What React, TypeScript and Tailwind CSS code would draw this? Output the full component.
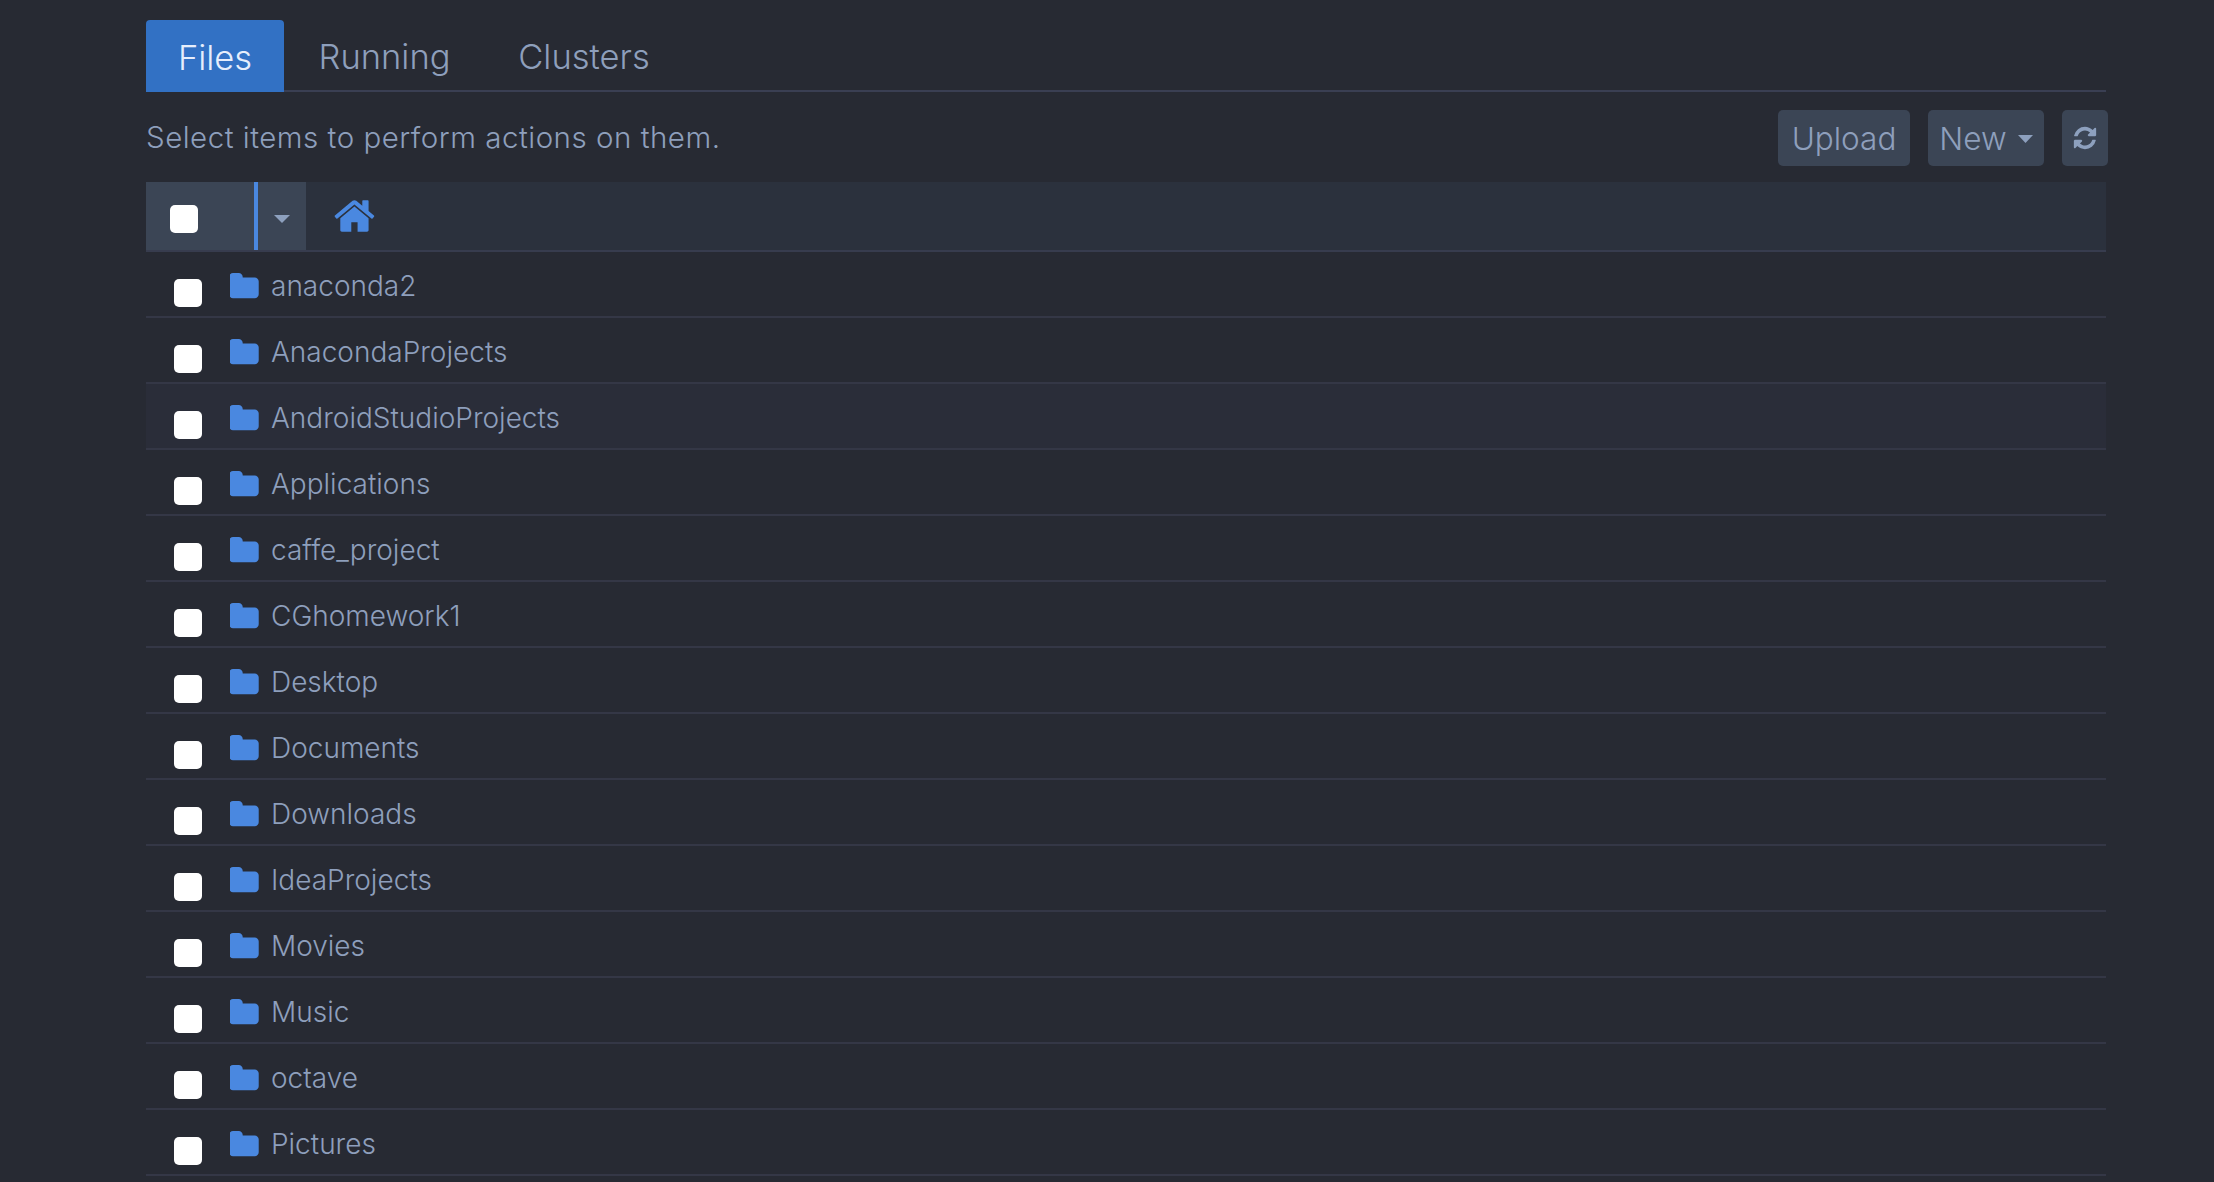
const HOME = "M1408 992v480q0 26-19 45t-45 19h-384v-384h-256v384h-384q-26 0-45-19t-19-45v-480q0-1 .5-3t.5-3l575-474 575 474q1 2 1 6zm223-69l-62 74q-8 9-21 11h-3q-13 0-21-7l-692-577-692 577q-12 8-24 7-13-2-21-11l-62-74q-8-10-7-23.5t11-21.5l719-599q32-26 76-26t76 26l244 204v-195q0-14 9-23t23-9h192q14 0 23 9t9 23v408l219 182q10 8 11 21.5t-7 23.5z";
const FOLDER = "M1600 648v704q0 92-66 158t-158 66h-1216q-92 0-158-66t-66-158v-960q0-92 66-158t158-66h320q92 0 158 66t66 158v32h672q92 0 158 66t66 158z";
const REFRESH = "M1639 1056q0 5-1 7-64 268-268 434.5t-478 166.5q-146 0-282.5-55t-243.5-157l-129 129q-19 19-45 19t-45-19-19-45v-448q0-26 19-45t45-19h448q26 0 45 19t19 45-19 45l-137 137q71 66 161 102t187 36q134 0 250-65t186-179q11-17 53-117 8-23 30-23h192q13 0 22.5 9.5t9.5 22.5zm25-800v448q0 26-19 45t-45 19h-448q-26 0-45-19t-19-45 19-45l138-138q-148-137-349-137-134 0-250 65t-186 179q-11 17-53 117-8 23-30 23h-199q-13 0-22.5-9.5t-9.5-22.5v-7q65-268 270-434.5t480-166.5q146 0 284 55.5t245 156.5l130-129q19-19 45-19t45 19 19 45z";

const folders = ["anaconda2","AnacondaProjects","AndroidStudioProjects","Applications","caffe_project","CGhomework1","Desktop","Documents","Downloads","IdeaProjects","Movies","Music","octave","Pictures"];

function Check({ className = "" }: { className?: string }) {
  return <input type="checkbox" className={"appearance-none w-[28px] h-[28px] rounded-[5px] bg-white block shrink-0 " + className} />;
}

function Caret({ w = 16, h = 8 }: { w?: number; h?: number }) {
  return (
    <svg width={w} height={h} viewBox="0 0 16 8" className="shrink-0" preserveAspectRatio="none">
      <path d="M0 0h16L8 8z" fill="#8da0be" />
    </svg>
  );
}

export default function App() {
  return (
    <div className="w-full h-[1182px] overflow-hidden bg-[#272a33] text-[#8e9fbc] font-['Inter','Liberation_Sans',sans-serif] font-light">
      <div className="w-[1960px] ml-[146px] pt-[20px]">
        <div className="flex h-[72px] border-b-2 border-[#3a3f53] text-[34.5px]">
          <div className="w-[138px] h-[72px] shrink-0 rounded-t-[4px] bg-[#3271c4] text-[#e6eefc] flex items-center justify-center pt-[3px]">Files</div>
          <div className="w-[199px] flex items-center justify-center pt-[3px] pl-[2px]">Running</div>
          <div className="w-[200px] flex items-center justify-center pt-[3px] pl-[2px]">Clusters</div>
        </div>

        <div className="flex items-center h-[90px]">
          <span className="text-[29.5px] tracking-[0.5px]">Select items to perform actions on them.</span>
          <div className="ml-auto flex items-center gap-[18px] -mr-[2px] mt-[2px]">
            <button className="h-[56px] w-[132px] rounded-[5px] bg-[#3b4555] text-[31.5px] flex items-center justify-center pt-[2px]">Upload</button>
            <button className="h-[56px] w-[116px] rounded-[5px] bg-[#3b4555] text-[31.5px] flex items-center justify-center gap-[11px] pt-[2px]">New<Caret w={15} h={8} /></button>
            <button className="h-[56px] w-[46px] rounded-[5px] bg-[#3b4555] flex items-center justify-center">
              <svg width="26" height="26" viewBox="0 0 1792 1792"><path d={REFRESH} fill="#8da0be" /></svg>
            </button>
          </div>
        </div>

        <div className="flex h-[70px] bg-[#2b313d] border-b-2 border-[#373c4e]">
          <div className="flex w-[160px] h-[68px] bg-[#3b4555]">
            <div className="w-[108px] flex items-center pl-[24px] pt-[5px]"><Check /></div>
            <div className="w-[4px] bg-[#4a88e0]" />
            <div className="flex-1 flex items-center justify-center pt-[5px]"><Caret /></div>
          </div>
          <div className="flex items-center pl-[28px]">
            <svg width="44" height="44" viewBox="0 0 1792 1792"><path d={HOME} fill="#4a88e0" /></svg>
          </div>
        </div>

        <div>
          {folders.map((name, i) => (
            <div key={name} className={"flex h-[66px] items-start border-b-2 border-[#343746] " + (i === 2 ? "bg-[#2a2d39]" : "")}>
              <Check className="ml-[28px] mt-[27px]" />
              <svg width="30" height="32" viewBox="0 0 1664 1792" className="ml-[28px] mt-[18px] shrink-0"><path d={FOLDER} fill="#4a88e0" /></svg>
              <span className="ml-[11px] mt-[14px] text-[28px] leading-[40px]">{name}</span>
            </div>
          ))}
        </div>
      </div>
    </div>
  );
}
